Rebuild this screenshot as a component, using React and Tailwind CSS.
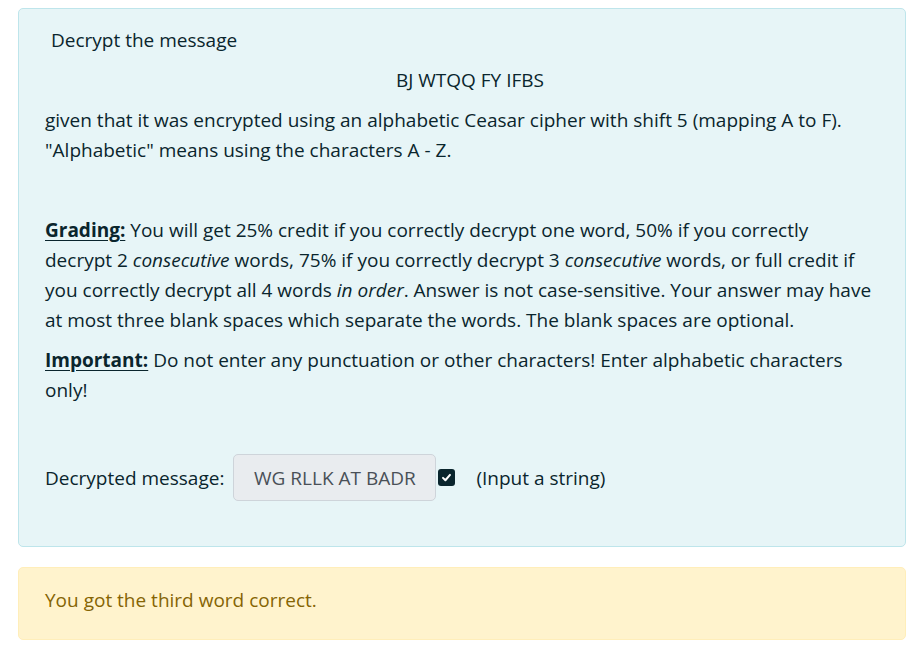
import React from "react";

export default function App() {
  return (
    <div className="bg-white w-[907px] h-[647px] overflow-hidden" style={{ fontFamily: "'Open Sans', sans-serif" }}>
      <div className="pt-[8px] pl-[18px] pr-[1px]">
        <div className="rounded-[5px] border border-[#bee5eb] bg-[#e7f5f7] text-[#0a252d] text-[19px] leading-[30px] pl-[26px] pr-[10px] pt-[16px] pb-[45px] whitespace-nowrap">
          <div className="pl-[6px]">Decrypt the message</div>
          <div className="text-center mt-[10px]">BJ WTQQ FY IFBS</div>
          <p className="mt-[10px]">
            given that it was encrypted using an alphabetic Ceasar cipher with shift 5 (mapping A to F).
            <br />
            "Alphabetic" means using the characters A - Z.
          </p>
          <p className="mt-[50px]">
            <b className="underline underline-offset-[3px]">Grading:</b> You will get 25% credit if you correctly decrypt one word, 50% if you correctly
            <br />
            decrypt 2 <i>consecutive</i> words, 75% if you correctly decrypt 3 <i>consecutive</i> words, or full credit if
            <br />
            you correctly decrypt all 4 words <i>in order</i>. Answer is not case-sensitive. Your answer may have
            <br />
            at most three blank spaces which separate the words. The blank spaces are optional.
          </p>
          <p className="mt-[10px]">
            <b className="underline underline-offset-[3px]">Important:</b> Do not enter any punctuation or other characters! Enter alphabetic characters
            <br />
            only!
          </p>
          <div className="mt-[49px] flex items-center">
            <span>Decrypted message:</span>
            <div className="ml-[9px] w-[203px] h-[47px] rounded-[5px] border border-[#ced4da] bg-[#e9ecef] text-[#495057] flex items-center justify-center">
              WG RLLK AT BADR
            </div>
            <div className="ml-[2px] w-[17px] h-[17px] rounded-[3px] bg-[#0a252d] flex items-center justify-center">
              <svg width="11" height="11" viewBox="0 0 12 12" fill="none">
                <path d="M2.2 6.4 L4.8 9 L9.8 3.2" stroke="white" strokeWidth="2.2" strokeLinecap="round" strokeLinejoin="round" />
              </svg>
            </div>
            <span className="ml-[21px]">(Input a string)</span>
          </div>
        </div>
        <div className="mt-[20px] rounded-[5px] border border-[#ffeeba] bg-[#fff3cd] text-[#856404] text-[19px] leading-[30px] pl-[26px] pt-[17px] pb-[24px]">
          You got the third word correct.
        </div>
      </div>
    </div>
  );
}
